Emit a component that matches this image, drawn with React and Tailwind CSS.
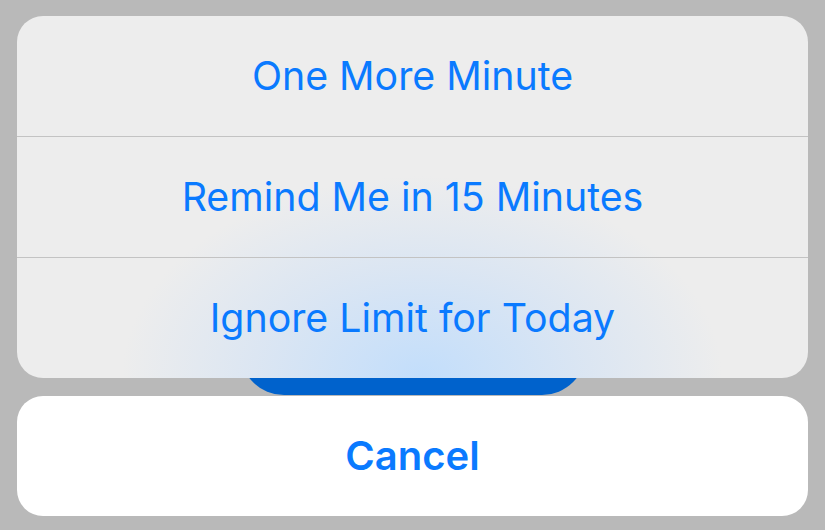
const OPTIONS = ["One More Minute", "Remind Me in 15 Minutes", "Ignore Limit for Today"]

export default function App() {
  return (
    <div
      className="relative w-[825px] h-[530px] bg-[#b9b9b9] px-[17px] pt-[16px] flex flex-col gap-[18px] overflow-hidden"
      style={{ fontFamily: "Inter, 'Noto Sans', sans-serif" }}
    >
      {/* button peeking out from behind the sheet */}
      <div className="absolute left-[240px] top-[290px] w-[346px] h-[105px] rounded-[44px] bg-[#0062cc]" />

      <div className="relative h-[362px] rounded-[26px] bg-[#ededed] overflow-hidden flex flex-col">
        <div
          className="absolute inset-0 pointer-events-none"
          style={{ background: "radial-gradient(ellipse 300px 200px at 405px 360px, rgba(192,221,252,0.95), rgba(205,224,247,0.55) 55%, rgba(237,237,237,0) 100%)" }}
        />
        {OPTIONS.map((label, i) => (
          <div
            key={label}
            className={"relative flex-1 flex items-center justify-center text-[39.3px] text-[#0a7aff] " + (i > 0 ? "border-t border-[#c3c3c3]" : "")}
          >
            {label}
          </div>
        ))}
      </div>

      <div className="h-[120px] rounded-[26px] bg-white flex items-center justify-center text-[40px] font-semibold text-[#0a7aff]">
        Cancel
      </div>
    </div>
  )
}
